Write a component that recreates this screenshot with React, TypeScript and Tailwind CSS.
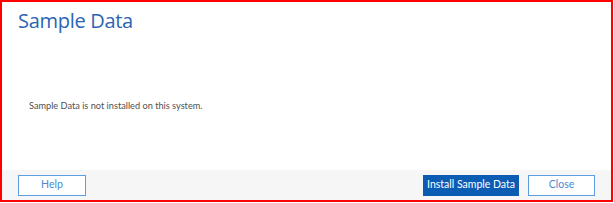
export default function App() {
  return (
    <div className="w-[613px] h-[202px] border-2 border-[#ff0000] bg-white flex flex-col font-['Lato',sans-serif]">
      <div className="flex-1 flex flex-col">
        <h1 className="pl-[16px] pt-[6px] text-[20px] leading-[26px] text-[#2b64b4] font-['Open_Sans',sans-serif] tracking-[-0.3px]">Sample Data</h1>
        <p className="pl-[27px] mt-[65px] text-[9.2px] text-[#505050]">Sample Data is not installed on this system.</p>
      </div>
      <div className="h-[30px] bg-[#f6f6f6] flex items-center px-[16px]">
        <button className="w-[68px] h-[21px] border border-[#5aa0e0] bg-white text-[10.5px] text-[#4a8ad6]">Help</button>
        <div className="flex-1" />
        <button className="w-[96px] h-[21px] bg-[#0b5cb3] text-white text-[10.5px] whitespace-nowrap">Install Sample Data</button>
        <button className="ml-[9px] w-[67px] h-[21px] border border-[#5aa0e0] bg-white text-[10.5px] text-[#4a8ad6]">Close</button>
      </div>
    </div>
  );
}
